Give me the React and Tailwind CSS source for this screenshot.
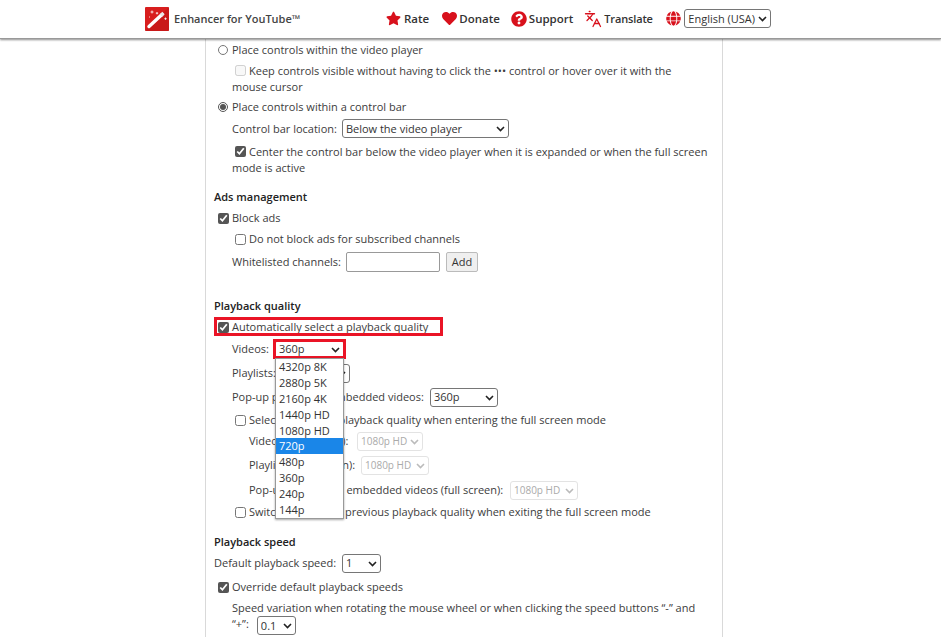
import React from "react";
import { FaStar, FaHeart, FaQuestionCircle, FaGlobe } from "react-icons/fa";
import { Languages } from "lucide-react";

function Check({ checked, disabled }) {
  return (
    <input
      type="checkbox"
      defaultChecked={checked}
      disabled={disabled}
      className="w-[11px] h-[11px] m-0 shrink-0 accent-[#555]"
    />
  );
}

function Sel({ w, value, disabled, className = "" }) {
  return (
    <span style={{ width: w }} className={"relative inline-flex shrink-0 align-middle " + className}>
      <select
        defaultValue={value}
        disabled={disabled}
        className={
          "appearance-none w-full h-[19px] rounded-[3px] bg-white pl-[3px] leading-[16px] border " +
          (disabled ? "pr-[10px] text-[10px] border-[#e3e3e3] text-[#aaa]" : "pr-[14px] text-[11px] border-[#767676] text-[#333]")
        }
      >
        <option>{value}</option>
      </select>
      <svg
        width="9"
        height="6"
        viewBox="0 0 9 6"
        className="absolute right-[4px] top-[7px] pointer-events-none"
      >
        <path d="M1 1 4.5 4.5 8 1" fill="none" stroke={disabled ? "#bbb" : "#222"} strokeWidth="1.6" />
      </svg>
    </span>
  );
}

function Logo() {
  return (
    <svg width="24" height="24" viewBox="0 0 24 24" className="shrink-0">
      <rect width="24" height="24" rx="1" fill="#d81e1e" />
      <path d="M24 0v24H0z" fill="#b81414" opacity="0.45" />
      <path d="M4 19.5 17 7.5" stroke="#fff" strokeWidth="3.4" strokeLinecap="round" />
      <path d="M16 8.5 18.5 6" stroke="#e8e8e8" strokeWidth="3.4" />
      <path d="M7 3.5v3M5.5 5h3M12 5v2.4M10.8 6.2h2.4M20.5 10.5v2.4M19.3 11.7h2.4M4 10h1" stroke="#fff" strokeWidth="0.8" />
    </svg>
  );
}

function Nav({ icon, label, className, textClass = "text-[11.5px]" }) {
  return (
    <div className={"flex items-center " + className}>
      {icon}
      <span className={"font-semibold text-[#333] whitespace-nowrap " + textClass}>{label}</span>
    </div>
  );
}

const options = ["4320p 8K", "2880p 5K", "2160p 4K", "1440p HD", "1080p HD", "720p", "480p", "360p", "240p", "144p"];

export default function App() {
  return (
    <div
      className="h-[637px] w-[941px] overflow-hidden bg-white text-[#3c3c3c] text-[11px] leading-[16px]"
      style={{ fontFamily: '"Open Sans", "Noto Sans", sans-serif' }}
    >
      <header className="relative z-10 h-[39px] bg-white border-b border-[#999] shadow-[0_1px_2px_rgba(0,0,0,0.45)] flex items-center pl-[145px] pb-[1px]">
        <Logo />
        <span className="ml-[5px] w-[127px] text-[11px] font-semibold text-[#444] whitespace-nowrap">Enhancer for YouTube™</span>
        <Nav className="ml-[85px] gap-[3px]" icon={<FaStar className="text-[#d8111c] w-[15px] h-[15px]" />} label="Rate" />
        <Nav className="ml-[13px] gap-[2px]" icon={<FaHeart className="text-[#d8111c] w-[15px] h-[15px]" />} label="Donate" />
        <Nav className="ml-[11px] gap-[2px]" icon={<FaQuestionCircle className="text-[#d8111c] w-[16px] h-[16px]" />} label="Support" />
        <Nav className="ml-[11px] gap-[2px]" textClass="w-[49px] text-[11px] tracking-[-0.15px]" icon={<Languages className="text-[#d8111c] w-[18px] h-[18px]" strokeWidth={1.7} />} label="Translate" />
        <FaGlobe className="ml-[13px] text-[#d8111c] w-[15px] h-[15px]" />
        <Sel className="ml-[3px]" w="87px" value="English (USA)" />
      </header>

      <main className="ml-[205px] w-[518px] h-[598px] border-x border-[#d9d9d9] pt-[3px] pl-[8px] pr-[8px]">
        {/* Controls */}
        <div className="flex items-center gap-[4px] h-[16px] pl-[4px]">
          <input type="radio" name="ctl" className="w-[10px] h-[10px] m-0 accent-[#555]" />
          <span>Place controls within the video player</span>
        </div>
        <div className="mt-[5px] pl-[18px] pr-[20px]">
          <input type="checkbox" disabled className="w-[11px] h-[11px] m-0 ml-[3px] mr-[3px] align-[-1px]" />
          Keep controls visible without having to click the ••• control or hover over it with the mouse cursor
        </div>
        <div className="mt-[4px] flex items-center gap-[4px] h-[16px] pl-[4px]">
          <input type="radio" name="ctl" defaultChecked className="w-[10px] h-[10px] m-0 accent-[#555]" />
          <span>Place controls within a control bar</span>
        </div>
        <div className="mt-[4px] pl-[18px] flex items-center gap-[5px] h-[19px]">
          <span>Control bar location:</span>
          <Sel w="167px" value="Below the video player" />
        </div>
        <div className="mt-[6px] pl-[18px]">
          <input type="checkbox" defaultChecked className="w-[11px] h-[11px] m-0 ml-[3px] mr-[3px] align-[-1px] accent-[#555]" />
          Center the control bar below the video player when it is expanded or when the full screen mode is active
        </div>

        {/* Ads */}
        <h2 className="mt-[13px] font-semibold text-[#222]">Ads management</h2>
        <div className="mt-[5px] flex items-center gap-[3px] h-[16px] pl-[4px]">
          <Check checked />
          <span>Block ads</span>
        </div>
        <div className="mt-[5px] flex items-center gap-[3px] h-[16px] pl-[21px]">
          <Check />
          <span>Do not block ads for subscribed channels</span>
        </div>
        <div className="mt-[5px] flex items-center h-[20px] pl-[18px]">
          <span className="w-[114px]">Whitelisted channels:</span>
          <input type="text" className="w-[94px] h-[20px] border border-[#999] rounded-[2px] bg-white" />
          <button className="ml-[6px] w-[32px] h-[20px] border border-[#bbb] rounded-[2px] bg-[#efefef] text-[11px] text-[#333]">Add</button>
        </div>

        {/* Playback quality */}
        <h2 className="mt-[26px] font-semibold text-[#222]">Playback quality</h2>
        <div className="relative mt-[5px] flex items-center gap-[3px] h-[16px] pl-[4px]">
          <Check checked />
          <span>Automatically select a playback quality</span>
          <div className="absolute left-0 -top-[2px] w-[229px] h-[19px] border-[3px] border-[#ea1426]" />
        </div>
        <div className="relative mt-[5px] flex items-center h-[18px] pl-[18px]">
          <span className="w-[43px]">Videos:</span>
          <Sel w="69px" value="360p" />
          <div className="absolute left-[59px] -top-[1px] w-[73px] h-[20px] border-[3px] border-[#ea1426]" />
          <ul className="absolute z-10 left-[61px] top-[18px] w-[69px] bg-white border border-[#999] shadow-[0_1px_2px_rgba(0,0,0,0.35)]">
            {options.map((o) => (
              <li key={o} className={"h-[15.9px] pl-[3px] text-[11px] leading-[15px] " + (o === "720p" ? "bg-[#1a86e8] text-white" : "text-[#333]")}>{o}</li>
            ))}
          </ul>
        </div>
        <div className="mt-[6px] flex items-center h-[18px] pl-[18px]">
          <span className="w-[45px]">Playlists:</span>
          <Sel w="73px" value="360p" />
        </div>
        <div className="mt-[6px] flex items-center h-[18px] pl-[18px]">
          <span className="w-[198px]">Pop-up players for embedded videos:</span>
          <Sel w="68px" value="360p" />
        </div>
        <div className="mt-[6px] flex items-center gap-[3px] h-[16px] pl-[21px]">
          <Check />
          <span>Select a different playback quality when entering the full screen mode</span>
        </div>
        <div className="mt-[4px] flex items-center h-[18px] pl-[35px]">
          <span className="w-[108px]">Videos (full screen):</span>
          <Sel w="66px" value="1080p HD" disabled />
        </div>
        <div className="mt-[6px] flex items-center h-[18px] pl-[35px]">
          <span className="w-[112px]">Playlists (full screen):</span>
          <Sel w="68px" value="1080p HD" disabled />
        </div>
        <div className="mt-[7px] flex items-center h-[18px] pl-[35px]">
          <span className="w-[261px]">Pop-up players for embedded videos (full screen):</span>
          <Sel w="68px" value="1080p HD" disabled />
        </div>
        <div className="mt-[5px] flex items-center gap-[3px] h-[16px] pl-[21px]">
          <Check />
          <span>Switch back to the previous playback quality when exiting the full screen mode</span>
        </div>

        {/* Speed */}
        <h2 className="mt-[14px] font-semibold text-[#222]">Playback speed</h2>
        <div className="mt-[4px] flex items-center h-[18px]">
          <span className="w-[128px]">Default playback speed:</span>
          <Sel w="39px" value="1" />
        </div>
        <div className="mt-[7px] flex items-center gap-[3px] h-[16px] pl-[4px]">
          <Check checked />
          <span>Override default playback speeds</span>
        </div>
        <div className="mt-[5px] pl-[18px] pr-[10px]">
          Speed variation when rotating the mouse wheel or when clicking the speed buttons “-” and “+”:
          <Sel className="ml-[8px]" w="39px" value="0.1" />
        </div>
      </main>
    </div>
  );
}
